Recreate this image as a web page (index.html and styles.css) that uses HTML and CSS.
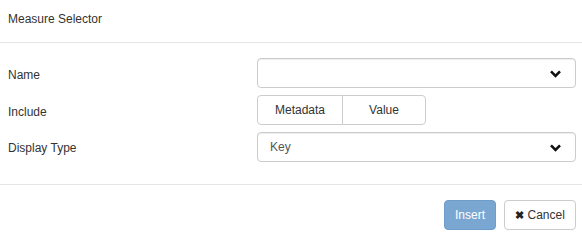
FILE: index.html
```html
<!DOCTYPE html>
<html>
<head>
<meta charset="utf-8">
<link rel="stylesheet" href="styles.css">
</head>
<body>
<div class="modal">
  <div class="modal-header">
    <h4 class="modal-title">Measure Selector</h4>
  </div>
  <div class="modal-body">
    <div class="form-row">
      <label class="control-label">Name</label>
      <div class="select">
        <span class="select-value"></span>
        <svg class="chevron" width="11" height="8" viewBox="0 0 11 8"><path d="M1 1.3 L5.5 5.8 L10 1.3" fill="none" stroke="#111" stroke-width="2.6"/></svg>
      </div>
    </div>
    <div class="form-row">
      <label class="control-label label-include">Include</label>
      <div class="btn-group">
        <button class="btn btn-meta">Metadata</button>
        <button class="btn btn-value">Value</button>
      </div>
    </div>
    <div class="form-row">
      <label class="control-label label-display">Display Type</label>
      <div class="select">
        <span class="select-value">Key</span>
        <svg class="chevron" width="11" height="8" viewBox="0 0 11 8"><path d="M1 1.3 L5.5 5.8 L10 1.3" fill="none" stroke="#111" stroke-width="2.6"/></svg>
      </div>
    </div>
  </div>
  <div class="modal-footer">
    <button class="btn btn-primary">Insert</button>
    <button class="btn btn-default"><span class="times">&#10006;</span> Cancel</button>
  </div>
</div>
</body>
</html>
```

FILE: styles.css
```css
* { box-sizing: border-box; }
html, body { margin: 0; padding: 0; background: #fff; }
body {
  font-family: "Liberation Sans", Arial, sans-serif;
  font-size: 12px;
  line-height: 17px;
  color: #333;
}
.modal { width: 582px; }
.modal-header {
  padding: 11px 8px 14px;
  border-bottom: 1px solid #e5e5e5;
}
.modal-title {
  margin: 0;
  font-size: 12px;
  font-weight: normal;
  line-height: 17px;
}
.modal-body {
  padding: 15px 6px 22px 8px;
  display: flex;
  flex-direction: column;
  gap: 7px;
}
.form-row {
  display: grid;
  grid-template-columns: 249px 1fr;
  align-items: start;
}
.control-label {
  padding-top: 9px;
}
.label-include { padding-top: 9px; }
.label-display { padding-top: 8px; }
.select {
  height: 30px;
  border: 1px solid #ccc;
  border-radius: 4px;
  box-shadow: inset 0 1px 1px rgba(0,0,0,0.075);
  display: flex;
  align-items: center;
  justify-content: space-between;
  padding: 0 14px 0 12px;
  color: #555;
}
.chevron { display: block; margin-top: 1px; }
.btn-group { display: flex; }
.btn {
  font-family: inherit;
  font-size: 12px;
  line-height: 17px;
  height: 30px;
  padding: 0 12px;
  border: 1px solid #ccc;
  border-radius: 4px;
  background: #fff;
  color: #333;
  cursor: pointer;
}
.btn-meta {
  width: 86px;
  border-radius: 4px 0 0 4px;
}
.btn-value {
  width: 84px;
  margin-left: -1px;
  border-radius: 0 4px 4px 0;
}
.modal-footer {
  border-top: 1px solid #e5e5e5;
  padding: 15px 6px 11px 8px;
  display: flex;
  justify-content: flex-end;
  gap: 8px;
}
.btn-primary {
  background: #7aa7d2;
  border-color: #6e9dca;
  color: #fff;
  width: 52px;
  padding: 0;
}
.btn-default {
  width: 72px;
  padding: 0;
}
.times { font-size: 11px; font-weight: bold; color: #222; }
```
